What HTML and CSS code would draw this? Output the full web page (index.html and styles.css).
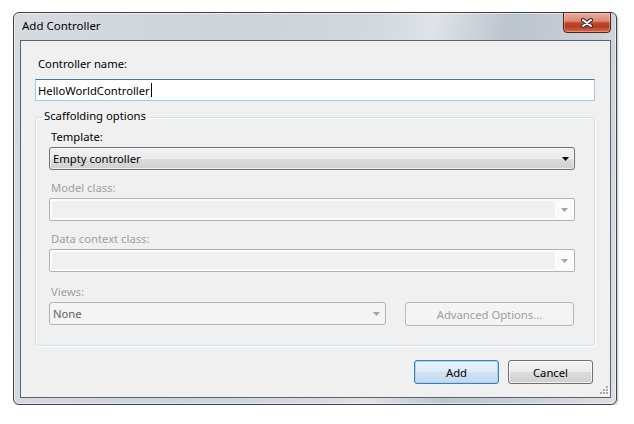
FILE: index.html
```html
<!DOCTYPE html>
<html lang="en">
<head>
<meta charset="utf-8">
<title>Add Controller</title>
<link rel="stylesheet" href="styles.css">
</head>
<body>
<div class="window">
  <div class="titlebar">
    <span class="title">Add Controller</span>
    <div class="close">
      <svg width="14" height="10" viewBox="0 0 14 10"><path d="M3 2 L11 8 M11 2 L3 8" stroke="#463030" stroke-width="4.2" stroke-linecap="round"/><path d="M3 2 L11 8 M11 2 L3 8" stroke="#ffffff" stroke-width="2" stroke-linecap="round"/></svg>
    </div>
  </div>
  <div class="client">
    <div class="lbl">Controller name:</div>
    <div class="textbox"><span>HelloWorldController</span><span class="caret"></span></div>
    <fieldset class="group">
      <legend>Scaffolding options</legend>
      <div class="group-body">
        <div class="field">
          <div class="flabel">Template:</div>
          <div class="combo-active">
            <span>Empty controller</span>
            <svg class="arrow" width="7" height="4" viewBox="0 0 7 4"><polygon points="0,0 7,0 3.5,4" fill="#000"/></svg>
          </div>
        </div>
        <div class="field">
          <div class="flabel disabled">Model class:</div>
          <div class="combo-edit">
            <div class="edit"></div>
            <div class="drop"><svg width="7" height="4" viewBox="0 0 7 4"><polygon points="0,0 7,0 3.5,4" fill="#a3a3a3"/></svg></div>
          </div>
        </div>
        <div class="field">
          <div class="flabel disabled">Data context class:</div>
          <div class="combo-edit">
            <div class="edit"></div>
            <div class="drop"><svg width="7" height="4" viewBox="0 0 7 4"><polygon points="0,0 7,0 3.5,4" fill="#a3a3a3"/></svg></div>
          </div>
        </div>
        <div class="field views">
          <div class="flabel disabled">Views:</div>
          <div class="views-row">
            <div class="combo-list">
              <span>None</span>
              <svg width="7" height="4" viewBox="0 0 7 4"><polygon points="0,0 7,0 3.5,4" fill="#a3a3a3"/></svg>
            </div>
            <div class="btn btn-disabled">Advanced Options...</div>
          </div>
        </div>
      </div>
    </fieldset>
    <div class="buttons">
      <div class="btn btn-default">Add</div>
      <div class="btn">Cancel</div>
    </div>
    <svg class="grip" width="11" height="11" viewBox="0 0 11 11">
      <rect x="8" y="1" width="2" height="2" fill="#fff"/><rect x="7" y="0" width="2" height="2" fill="#a8a8a8"/>
      <rect x="5" y="4" width="2" height="2" fill="#fff"/><rect x="4" y="3" width="2" height="2" fill="#a8a8a8"/>
      <rect x="8" y="4" width="2" height="2" fill="#fff"/><rect x="7" y="3" width="2" height="2" fill="#a8a8a8"/>
      <rect x="2" y="7" width="2" height="2" fill="#fff"/><rect x="1" y="6" width="2" height="2" fill="#a8a8a8"/>
      <rect x="5" y="7" width="2" height="2" fill="#fff"/><rect x="4" y="6" width="2" height="2" fill="#a8a8a8"/>
      <rect x="8" y="7" width="2" height="2" fill="#fff"/><rect x="7" y="6" width="2" height="2" fill="#a8a8a8"/>
    </svg>
  </div>
</div>
</body>
</html>
```

FILE: styles.css
```css
html, body {
  margin: 0;
  padding: 0;
  background: #ffffff;
}

body {
  font-family: "Segoe UI", "Noto Sans", sans-serif;
  font-size: 11.25px;
  line-height: 15px;
  color: #000;
}

.window {
  margin: 12px 0 0 13px;
  width: 604px;
  height: 393px;
  box-sizing: border-box;
  border: 1px solid #3d4246;
  border-radius: 6px;
  padding: 0 5px 6px 6px;
  display: flex;
  flex-direction: column;
  background: linear-gradient(100deg, #d6dbe0 0%, #ccd3d9 35%, #d3d9de 55%, #dfe3e7 63%, #bcc4cc 74%, #c6cdd4 84%, #dce0e4 100%);
  box-shadow: inset 0 0 0 1px rgba(255, 255, 255, 0.55), 1px 1px 2px rgba(0, 0, 0, 0.25);
}

.titlebar {
  flex: none;
  height: 27px;
  display: flex;
  justify-content: space-between;
  align-items: flex-start;
}

.title {
  margin: 5px 0 0 2px;
  font-size: 11.5px;
}

.close {
  width: 48px;
  height: 21px;
  margin-top: -1px;
  box-sizing: border-box;
  border: 1px solid #53241c;
  border-radius: 0 0 4px 4px;
  background: linear-gradient(#e9ab9c 0%, #dc8a76 42%, #c4472c 52%, #b83b23 72%, #d66a4e 100%);
  box-shadow: inset 0 0 0 1px rgba(255, 255, 255, 0.3);
  display: flex;
  align-items: center;
  justify-content: center;
}

.client {
  flex: 1;
  position: relative;
  border: 1px solid #5b636b;
  background: #f0f0f0;
  padding: 15px 15px 0 14px;
  display: flex;
  flex-direction: column;
}

.lbl {
  padding-left: 3px;
}

.textbox {
  margin-top: 8px;
  height: 22px;
  box-sizing: border-box;
  border: 1px solid #a4c9e3;
  border-top-color: #3d7bad;
  background: #fff;
  padding: 0 2px;
  display: flex;
  align-items: center;
}

.caret {
  width: 1px;
  height: 14px;
  background: #000;
  margin-left: 1px;
}

.group {
  margin: 7px 0 0 0;
  padding: 0;
  border: 1px solid #d5dfe5;
  border-radius: 3px;
  box-shadow: 1px 1px 0 #fff, inset 1px 1px 0 #fff;
  min-inline-size: 0;
}

.group legend {
  margin-left: 6px;
  padding: 0 2px 4px 2px;
  line-height: 15px;
}

.group-body {
  padding: 2px 19px 19px 13px;
}

.field {
  margin-top: 10px;
}

.field:first-child {
  margin-top: 0;
}

.field.views {
  margin-top: 12px;
}

.flabel {
  padding-left: 2px;
  margin-bottom: 3px;
}

.disabled {
  color: #a0a0a0;
}

.combo-active {
  height: 23px;
  box-sizing: border-box;
  border: 1px solid #707070;
  border-radius: 3px;
  background: linear-gradient(#f2f2f2 0%, #ebebeb 50%, #dddddd 50%, #cfcfcf 100%);
  box-shadow: inset 0 0 0 1px rgba(255, 255, 255, 0.6);
  padding: 0 5px 0 3px;
  display: flex;
  align-items: center;
  justify-content: space-between;
}

.combo-edit {
  height: 23px;
  box-sizing: border-box;
  border: 1px solid #b2b2b2;
  border-radius: 2px;
  background: #fbfbfb;
  padding: 2px 0 2px 2px;
  display: flex;
}

.combo-edit .edit {
  flex: 1;
  background: #f0f0f0;
}

.combo-edit .drop {
  width: 19px;
  display: flex;
  align-items: center;
  justify-content: center;
  padding-left: 0;
}

.views-row {
  display: flex;
  gap: 19px;
  align-items: flex-start;
}

.combo-list {
  width: 337px;
  height: 23px;
  box-sizing: border-box;
  border: 1px solid #b2b2b2;
  border-radius: 3px;
  background: #f4f4f4;
  color: #5f5f5f;
  padding: 0 5px 0 3px;
  display: flex;
  align-items: center;
  justify-content: space-between;
}

.btn {
  width: 85px;
  height: 24px;
  box-sizing: border-box;
  border: 1px solid #707070;
  border-radius: 3px;
  background: linear-gradient(#f2f2f2 0%, #ebebeb 50%, #dddddd 50%, #cfcfcf 100%);
  box-shadow: inset 0 0 0 1px rgba(255, 255, 255, 0.7);
  display: flex;
  align-items: center;
  justify-content: center;
}

.btn-disabled {
  width: 169px;
  border-color: #b8b8b8;
  background: #f4f4f4;
  box-shadow: none;
  color: #a0a0a0;
}

.btn-default {
  border-color: #3c7fb1;
  background: linear-gradient(#eaf3fb 0%, #dde9f6 50%, #d0e2f3 50%, #c3d9ef 100%);
  box-shadow: inset 0 0 0 1px #a9d2f2;
}

.buttons {
  margin-top: 14px;
  padding-right: 2px;
  display: flex;
  justify-content: flex-end;
  gap: 9px;
}

.grip {
  position: absolute;
  right: 0;
  bottom: 0;
}
```
